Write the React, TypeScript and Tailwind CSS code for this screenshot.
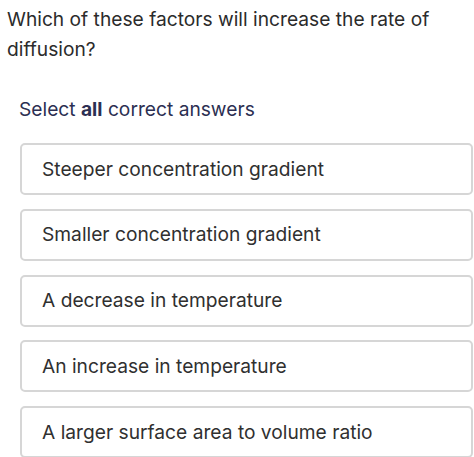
import React from "react";

const options = [
  "Steeper concentration gradient",
  "Smaller concentration gradient",
  "A decrease in temperature",
  "An increase in temperature",
  "A larger surface area to volume ratio",
];

export default function App() {
  return (
    <div
      className="w-[474px] h-[457px] overflow-hidden bg-white"
      style={{ fontFamily: "Inter, 'Liberation Sans', sans-serif" }}
    >
      <div className="pl-[7px] pt-[4px] text-[19.2px] leading-[30px] text-[#2b2b2b]">
        Which of these factors will increase the rate of diffusion?
      </div>
      <div className="mt-[30px] pl-[19px] text-[19.2px] leading-[30px] text-[#2c2f52]">
        Select <span className="font-bold">all</span> correct answers
      </div>
      <div className="mt-[19px] ml-[20px] mr-[1px] flex flex-col gap-[13.75px]">
        {options.map((o) => (
          <div
            key={o}
            className="h-[52px] flex items-center pl-[20px] border-2 border-[#d6d6d6] rounded-[5px] text-[19.2px] text-[#303030]"
          >
            {o}
          </div>
        ))}
      </div>
    </div>
  );
}
